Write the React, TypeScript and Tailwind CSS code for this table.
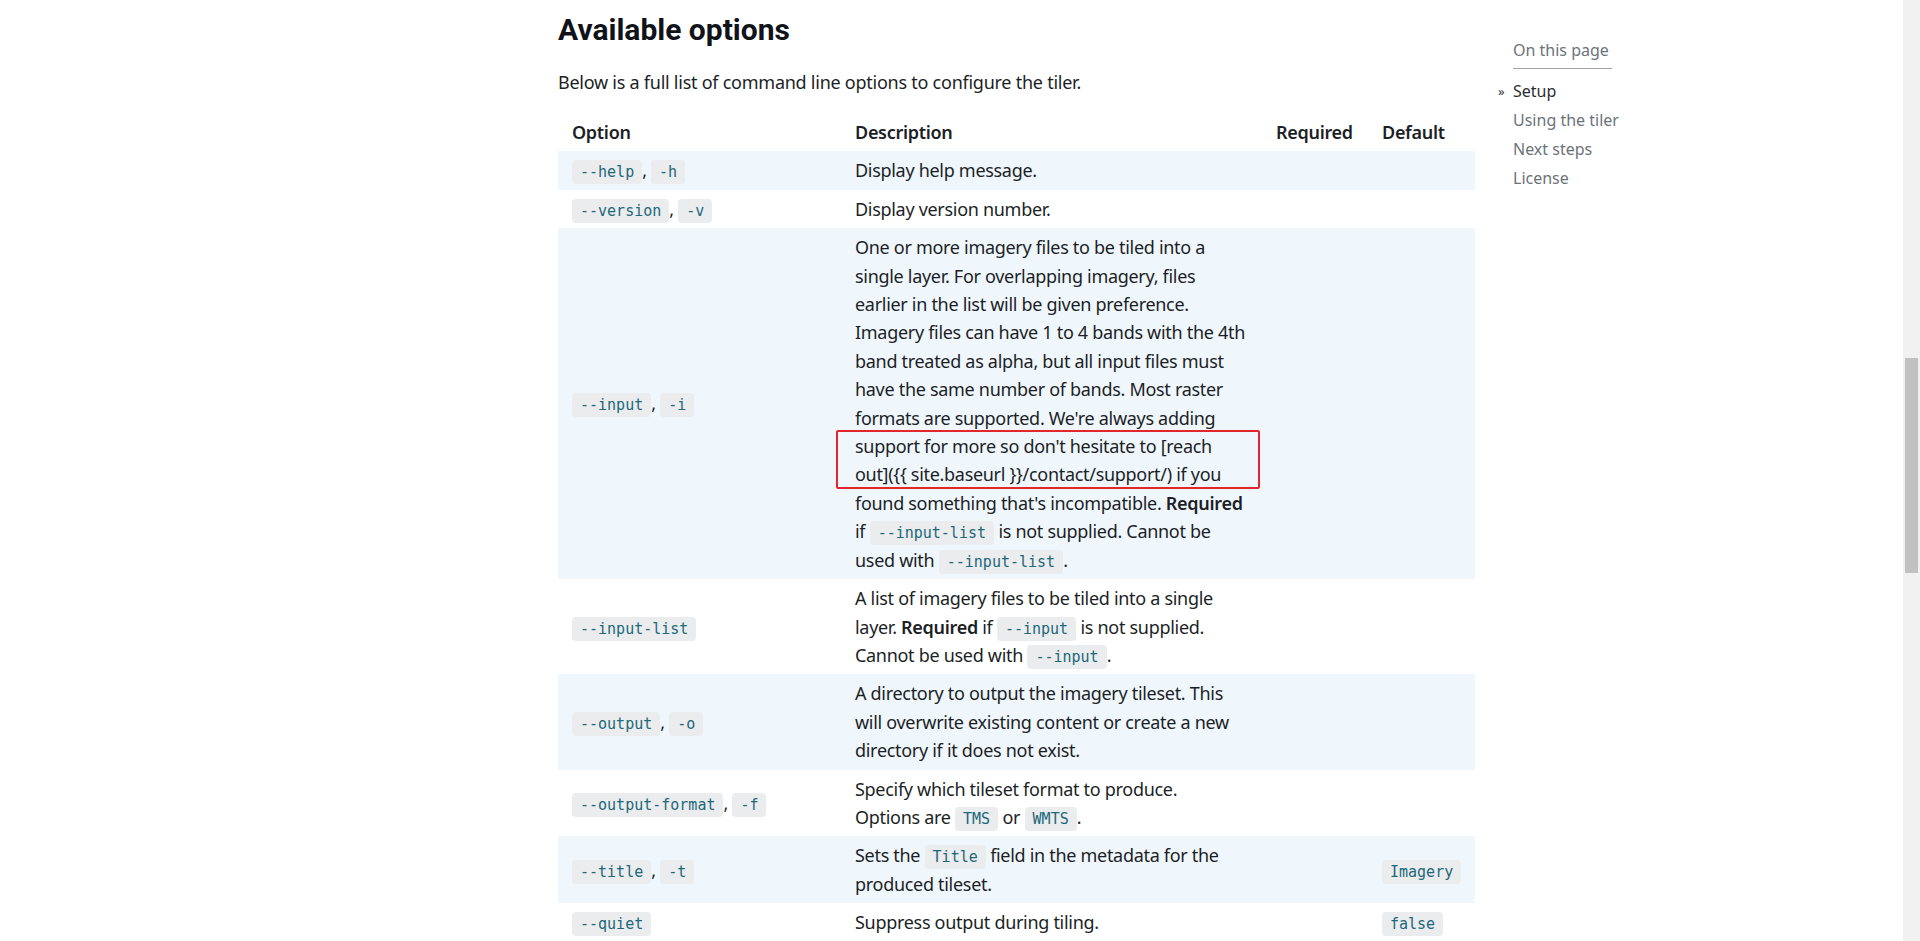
import React from "react";

type Row = {
  options: string[];
  description: React.ReactNode;
  required?: string;
  def?: string;
};

const Code: React.FC<{ children: React.ReactNode }> = ({ children }) => (
  <code className="rounded-[4px] bg-[#ebeced] px-2 py-[3px] font-['DejaVu_Sans_Mono',monospace] text-[15px] leading-none tracking-normal text-[#21687a]">
    {children}
  </code>
);

const rows: Row[] = [
  { options: ["--help", "-h"], description: "Display help message." },
  { options: ["--version", "-v"], description: "Display version number." },
  {
    options: ["--input", "-i"],
    description: (
      <>
        One or more imagery files to be tiled into a single layer. For overlapping imagery, files earlier in the list
        will be given preference. Imagery files can have 1 to 4 bands with the 4th band treated as alpha, but all input
        files must have the same number of bands. Most raster formats are supported. We're always adding support for
        more so don't hesitate to [reach out]({"{{"} site.baseurl {"}}"}/contact/support/) if you found something that's
        incompatible. <strong className="font-semibold">Required</strong> if <Code>--input-list</Code> is not supplied.
        Cannot be used with <Code>--input-list</Code>.
      </>
    ),
  },
  {
    options: ["--input-list"],
    description: (
      <>
        A list of imagery files to be tiled into a single layer. <strong className="font-semibold">Required</strong> if{" "}
        <Code>--input</Code> is not supplied. Cannot be used with <Code>--input</Code>.
      </>
    ),
  },
  {
    options: ["--output", "-o"],
    description:
      "A directory to output the imagery tileset. This will overwrite existing content or create a new directory if it does not exist.",
  },
  {
    options: ["--output-format", "-f"],
    description: (
      <>
        Specify which tileset format to produce.
        <br />
        Options are <Code>TMS</Code> or <Code>WMTS</Code>.
      </>
    ),
  },
  {
    options: ["--title", "-t"],
    description: (
      <>
        Sets the <Code>Title</Code> field in the metadata for the produced tileset.
      </>
    ),
    def: "Imagery",
  },
  { options: ["--quiet"], description: "Suppress output during tiling.", def: "false" },
];

const tocItems = ["Setup", "Using the tiler", "Next steps", "License"];

export default function App() {
  return (
    <div className="relative flex h-[941px] w-full overflow-hidden bg-white font-['Noto_Sans',sans-serif] text-[#1c1f26]">
      <div className="flex flex-1 pl-[558px]">
        {/* Main content */}
        <main className="w-[917px]">
          <h1 className="pt-[10px] font-['Roboto',sans-serif] text-[30px] leading-[40px] font-bold text-[#111318]">
            Available options
          </h1>
          <p className="mt-[18px] text-[18px] leading-[29px] tracking-[-0.25px]">
            Below is a full list of command line options to configure the tiler.
          </p>

          <div className="mt-[16px] text-[18px] leading-[28.4px] tracking-[-0.3px]">
            <div className="grid grid-cols-[283px_421px_106px_107px] font-semibold">
              <div className="px-[14px] py-[5px]">Option</div>
              <div className="px-[14px] py-[5px]">Description</div>
              <div className="px-[14px] py-[5px]">Required</div>
              <div className="px-[14px] py-[5px]">Default</div>
            </div>
            {rows.map((row, i) => (
              <div
                key={i}
                className={
                  "grid grid-cols-[283px_421px_106px_107px] items-center " +
                  (i % 2 === 0 ? "bg-[#eff6fc]" : "bg-white")
                }
              >
                <div className="px-[14px] py-[5px]">
                  {row.options.map((opt, j) => (
                    <React.Fragment key={opt}>
                      {j > 0 && ", "}
                      <Code>{opt}</Code>
                    </React.Fragment>
                  ))}
                </div>
                <div className="px-[14px] py-[5px]">{row.description}</div>
                <div className="px-[14px] py-[5px]">{row.required}</div>
                <div className="px-[14px] py-[5px]">{row.def && <Code>{row.def}</Code>}</div>
              </div>
            ))}
          </div>
        </main>

        {/* On this page */}
        <aside className="ml-[23px] pt-[36px] text-[16px] leading-[29px]">
          <div className="ml-[15px] w-[99px] border-b border-[#a0a4a8] pb-[3px] text-[#6c737a]">On this page</div>
          <ul className="mt-[8px]">
            {tocItems.map((item, i) => (
              <li key={item} className="flex">
                <span className="w-[15px] text-[13px] text-[#333]">{i === 0 ? "»" : ""}</span>
                <span className={i === 0 ? "text-[#2a2e33]" : "text-[#6c737a]"}>{item}</span>
              </li>
            ))}
          </ul>
        </aside>
      </div>

      {/* Scrollbar */}
      <div className="flex w-[17px] flex-col bg-[#f1f1f1] pt-[358px]">
        <div className="mx-[2px] h-[215px] bg-[#c1c1c1]" />
      </div>

      {/* Annotation box */}
      <div className="absolute top-[430px] left-[836px] h-[59px] w-[424px] rounded-[2px] border-2 border-[#e3262b]" />
    </div>
  );
}
